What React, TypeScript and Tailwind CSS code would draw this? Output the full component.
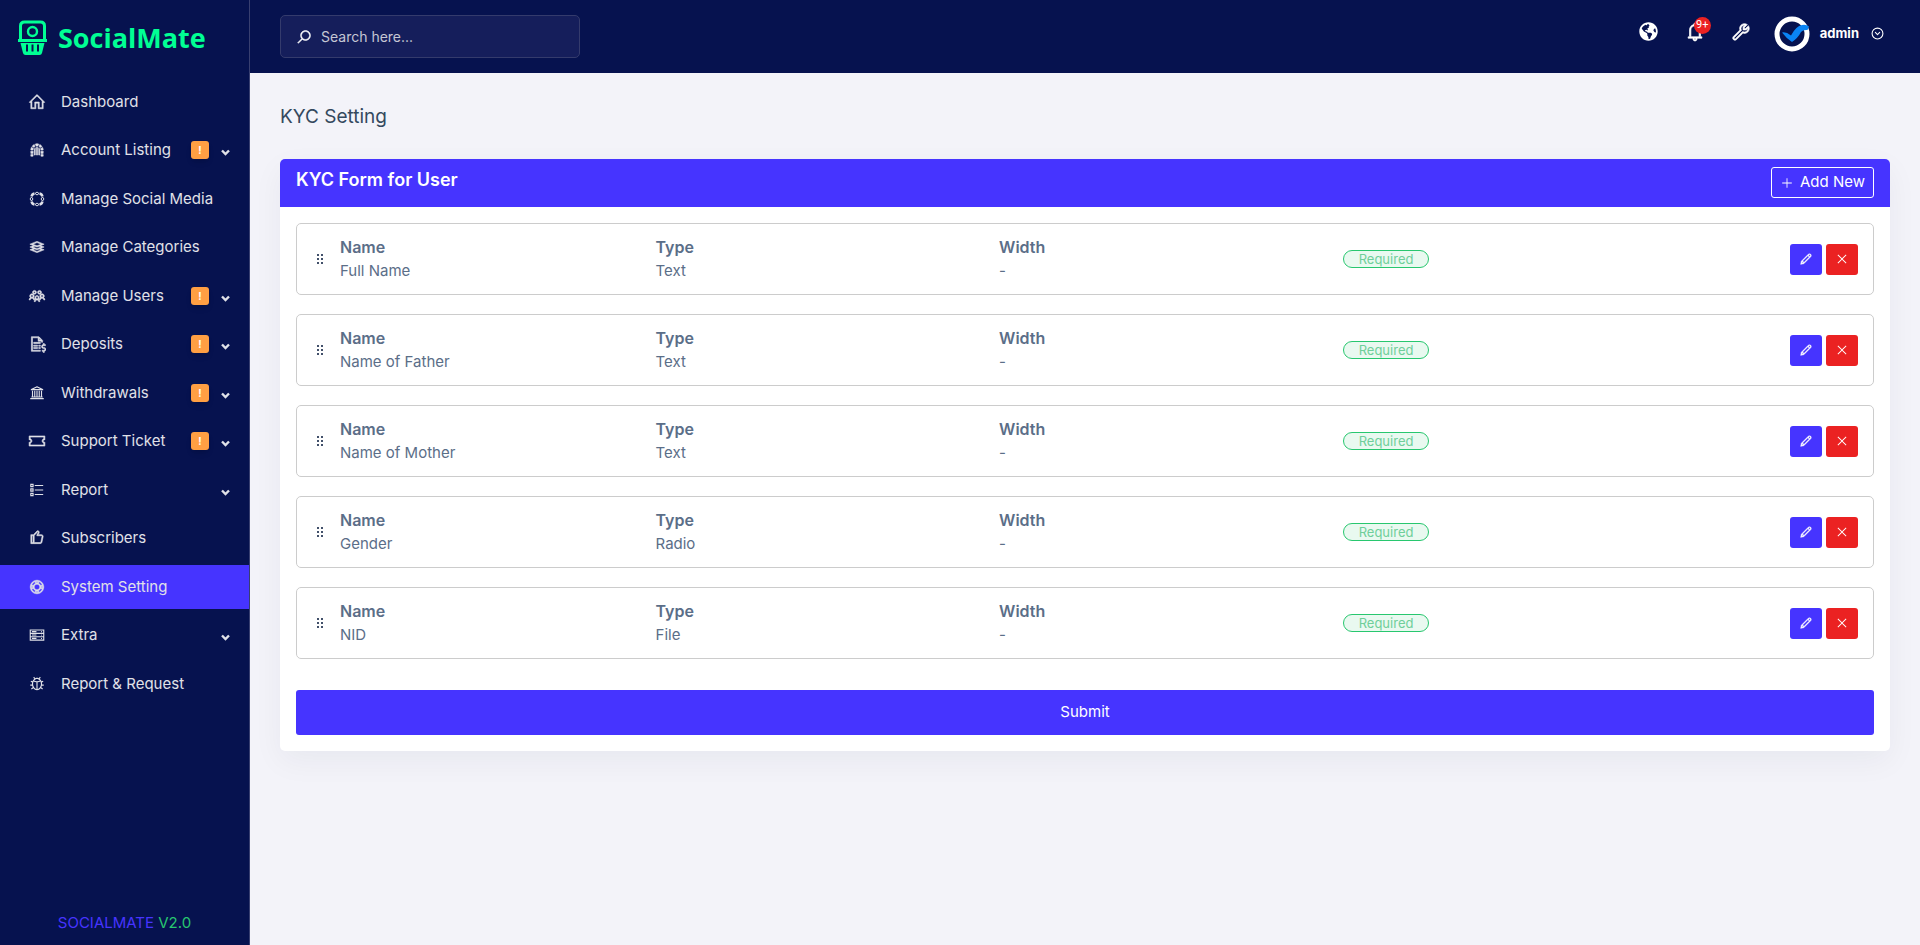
import {
  LiaBell,
  LiaBugSolid,
  LiaDungeonSolid,
  LiaFileInvoiceDollarSolid,
  LiaHomeSolid,
  LiaLayerGroupSolid,
  LiaLifeRing,
  LiaListSolid,
  LiaPenSolid,
  LiaPlusSolid,
  LiaSearchSolid,
  LiaServerSolid,
  LiaThumbsUp,
  LiaTicketAltSolid,
  LiaTimesSolid,
  LiaUniversitySolid,
  LiaUsersSolid,
  LiaWrenchSolid,
} from 'react-icons/lia';
import { FaGlobeAmericas } from 'react-icons/fa';
import { CircleChevronDown } from 'lucide-react';
import type { ReactNode } from 'react';

interface NavItem {
  label: string;
  icon: ReactNode;
  alert?: boolean;
  submenu?: boolean;
  active?: boolean;
}

function NodesIcon() {
  return (
    <svg width="16" height="16" viewBox="0 0 16 16" fill="none" stroke="currentColor" aria-hidden="true">
      <path
        d="M5.500 2.500Q3 3 2.500 5.500M10.500 2.500Q13 3 13.500 5.500M13.500 10.500Q13 13 10.500 13.500M5.500 13.500Q3 13 2.500 10.500"
        strokeWidth="2.400"
      />
      <path d="M8 1l2 1.500L8 4 6 2.500zM8 12l2 1.500L8 15l-2-1.500zM2.500 6L4 8l-1.500 2L1 8zM13.500 6L15 8l-1.500 2L12 8z" />
    </svg>
  );
}

const navItems: NavItem[] = [
  { label: 'Dashboard', icon: <LiaHomeSolid size={18} className="stroke-1" /> },
  { label: 'Account Listing', icon: <LiaDungeonSolid size={18} className="stroke-1" />, alert: true, submenu: true },
  { label: 'Manage Social Media', icon: <NodesIcon /> },
  { label: 'Manage Categories', icon: <LiaLayerGroupSolid size={18} className="stroke-1" /> },
  { label: 'Manage Users', icon: <LiaUsersSolid size={18} className="stroke-1" />, alert: true, submenu: true },
  { label: 'Deposits', icon: <LiaFileInvoiceDollarSolid size={18} className="stroke-1" />, alert: true, submenu: true },
  { label: 'Withdrawals', icon: <LiaUniversitySolid size={18} />, alert: true, submenu: true },
  { label: 'Support Ticket', icon: <LiaTicketAltSolid size={18} className="stroke-1" />, alert: true, submenu: true },
  { label: 'Report', icon: <LiaListSolid size={18} />, submenu: true },
  { label: 'Subscribers', icon: <LiaThumbsUp size={18} className="stroke-1" /> },
  { label: 'System Setting', icon: <LiaLifeRing size={18} className="stroke-1" />, active: true },
  { label: 'Extra', icon: <LiaServerSolid size={18} />, submenu: true },
  { label: 'Report & Request', icon: <LiaBugSolid size={18} /> },
];

const fields = [
  { name: 'Full Name', type: 'Text' },
  { name: 'Name of Father', type: 'Text' },
  { name: 'Name of Mother', type: 'Text' },
  { name: 'Gender', type: 'Radio' },
  { name: 'NID', type: 'File' },
];

function Logo() {
  return (
    <a href="#" className="flex items-center gap-[11px] pl-[18px] pt-5 text-[#00ff94]">
      <svg width="29" height="36" viewBox="0 0 29 36" fill="none" stroke="currentColor" aria-hidden="true">
        <path d="M2.500 19V6Q2.500 2 6.500 2H22.500Q26.500 2 26.500 6V19" strokeWidth="3" />
        <circle cx="14.500" cy="11.500" r="4.500" strokeWidth="2.400" />
        <path d="M0 20.500H29" strokeWidth="3" />
        <path d="M2.500 23H26.500L24 33Q23.500 35 21.500 35H7.500Q5.500 35 5 33z" fill="currentColor" stroke="none" />
        <path d="M9 24.500V31.500M14.500 24.500V31.500M20 24.500V31.500" stroke="#06124f" strokeWidth="2" />
      </svg>
      <span className="font-['Open_Sans',sans-serif] text-[27px] font-bold leading-9">SocialMate</span>
    </a>
  );
}

function SidebarLink({ item }: { item: NavItem }) {
  return (
    <li className="odd:mb-1 even:mb-[5px]">
      <a
        href="#"
        className={`flex h-11 items-center pl-7 pr-[19px] text-[#e0e1e8] ${item.active ? 'bg-[#4634ff]' : ''}`}
      >
        <span className="flex w-[18px] justify-center">{item.icon}</span>
        <span className="ml-[15px] flex-1 whitespace-nowrap text-[15px]">{item.label}</span>
        {item.alert && (
          <span className="flex size-[18px] items-center justify-center rounded-[3px] bg-[#ff9f43] text-[10px] font-bold text-white shadow-md">
            !
          </span>
        )}
        {item.submenu && (
          <svg width="9" height="7" viewBox="0 0 9 7" className="ml-3 mt-1" fill="none" stroke="currentColor">
            <path d="M1 1.500L4.500 5L8 1.500" strokeWidth="2.400" />
          </svg>
        )}
      </a>
    </li>
  );
}

function Sidebar() {
  return (
    <aside className="flex w-[250px] shrink-0 flex-col border-r border-[#383f70] bg-[#06124f]">
      <Logo />
      <nav className="mt-6">
        <ul>
          {navItems.map((item) => (
            <SidebarLink key={item.label} item={item} />
          ))}
        </ul>
      </nav>
      <p className="mt-auto pb-2.5 text-center text-[15px] leading-6 text-[#28c76f]">
        <span className="text-[#4634ff]">SOCIALMATE</span> V2.0
      </p>
    </aside>
  );
}

function Avatar() {
  return (
    <svg width="36" height="36" viewBox="0 0 36 36" aria-hidden="true">
      <circle cx="18" cy="18" r="15" fill="none" stroke="#fff" strokeWidth="5" />
      <path
        d="M8 16.500Q12 15.500 17 19.500Q22 10 28 9Q32 8 35 10.500L33.500 14Q29 13.500 27 16Q24 22 18 26Q12 22 8 16.500z"
        fill="#0a84f5"
      />
    </svg>
  );
}

function Topbar() {
  return (
    <header className="flex h-[73px] items-center justify-between bg-[#06124f] pl-[30px] pr-9 text-white">
      <label className="flex h-[43px] w-[300px] items-center gap-[9px] rounded-[5px] border border-[#343b6c] bg-[#151e5b] pl-[15px]">
        <LiaSearchSolid size={16} className="stroke-1" />
        <input
          type="text"
          aria-label="Search"
          placeholder="Search here..."
          className="min-w-0 flex-1 bg-transparent text-sm outline-none placeholder:text-[#c5c7d4]"
        />
      </label>
      <div className="mb-1.5 flex items-center">
        <button aria-label="Visit website" className="mb-1 mr-[26px]">
          <FaGlobeAmericas size={19} />
        </button>
        <button aria-label="Notifications" className="relative mb-1 mr-6">
          <LiaBell size={22} className="stroke-1" />
          <span className="absolute -top-1 left-[10px] flex size-[17px] items-center justify-center rounded-full bg-[#eb2222] font-['Roboto',sans-serif] text-[11px]">
            9+
          </span>
        </button>
        <button aria-label="System tools" className="mb-1 mr-[22px]">
          <LiaWrenchSolid size={22} className="stroke-1" />
        </button>
        <button className="flex items-center">
          <Avatar />
          <span className="ml-[10px] mr-3 text-[13px] font-bold">admin</span>
          <CircleChevronDown size={13} />
        </button>
      </div>
    </header>
  );
}

function DragHandle() {
  return (
    <svg width="7" height="11" viewBox="0 0 7 11" fill="#42506a" aria-hidden="true">
      <path d="M0 0h2v2H0zM4 0h2v2H4zM0 4h2v2H0zM4 4h2v2H4zM0 8h2v2H0zM4 8h2v2H4z" />
    </svg>
  );
}

function Cell({ label, value }: { label: string; value: string }) {
  return (
    <div>
      <p className="text-base font-semibold leading-6">{label}</p>
      <p className="text-[15px] leading-6">{value}</p>
    </div>
  );
}

function FieldRow({ name, type }: { name: string; type: string }) {
  return (
    <li className="grid grid-cols-[2fr_2fr_2fr_3fr] items-center rounded-[5px] border border-[#cccccc] px-[15px] py-[11px]">
      <div className="flex items-center gap-4 pl-[5px]">
        <DragHandle />
        <Cell label="Name" value={name} />
      </div>
      <Cell label="Type" value={type} />
      <Cell label="Width" value="-" />
      <div className="flex items-center justify-between">
        <span className="rounded-full border border-[#28c76f] bg-[#e9f9f0] px-[15px] text-[13px] leading-4 text-[#6fcf9a]">
          Required
        </span>
        <div className="flex gap-1 text-white">
          <button type="button" aria-label={`Edit ${name}`} className="flex h-[31px] w-8 items-center justify-center rounded-[3px] bg-[#4634ff]">
            <LiaPenSolid size={14} className="stroke-1" />
          </button>
          <button type="button" aria-label={`Remove ${name}`} className="flex h-[31px] w-8 items-center justify-center rounded-[3px] bg-[#eb2222]">
            <LiaTimesSolid size={14} />
          </button>
        </div>
      </div>
    </li>
  );
}

export default function App() {
  return (
    <div className="flex min-h-screen bg-[#f3f3f9] font-['Inter',sans-serif] text-[#5b6e88]">
      <Sidebar />
      <div className="min-w-0 flex-1">
        <Topbar />
        <main className="px-[30px] pb-[30px] pt-[30px]">
          <h1 className="text-[19px] leading-7 text-[#34495e]">KYC Setting</h1>
          <form
            onSubmit={(e) => e.preventDefault()}
            className="mt-7 overflow-hidden rounded-[5px] bg-white shadow-[0_10px_30px_0_rgba(18,38,63,0.05)]"
          >
            <div className="flex items-start justify-between bg-[#4634ff] px-4 pb-[9px] pt-2 text-white">
              <h2 className="text-lg font-semibold leading-[26px]">KYC Form for User</h2>
              <button type="button" className="flex h-[31px] items-center gap-1.5 rounded-[3px] border border-white px-2 text-[15px]">
                <LiaPlusSolid size={14} />
                Add New
              </button>
            </div>
            <div className="p-4">
              <ul className="flex flex-col gap-[19px]">
                {fields.map((field) => (
                  <FieldRow key={field.name} {...field} />
                ))}
              </ul>
              <button type="submit" className="mt-[31px] h-[45px] w-full rounded-[3px] bg-[#4634ff] text-[15px] text-white">
                Submit
              </button>
            </div>
          </form>
        </main>
      </div>
    </div>
  );
}
